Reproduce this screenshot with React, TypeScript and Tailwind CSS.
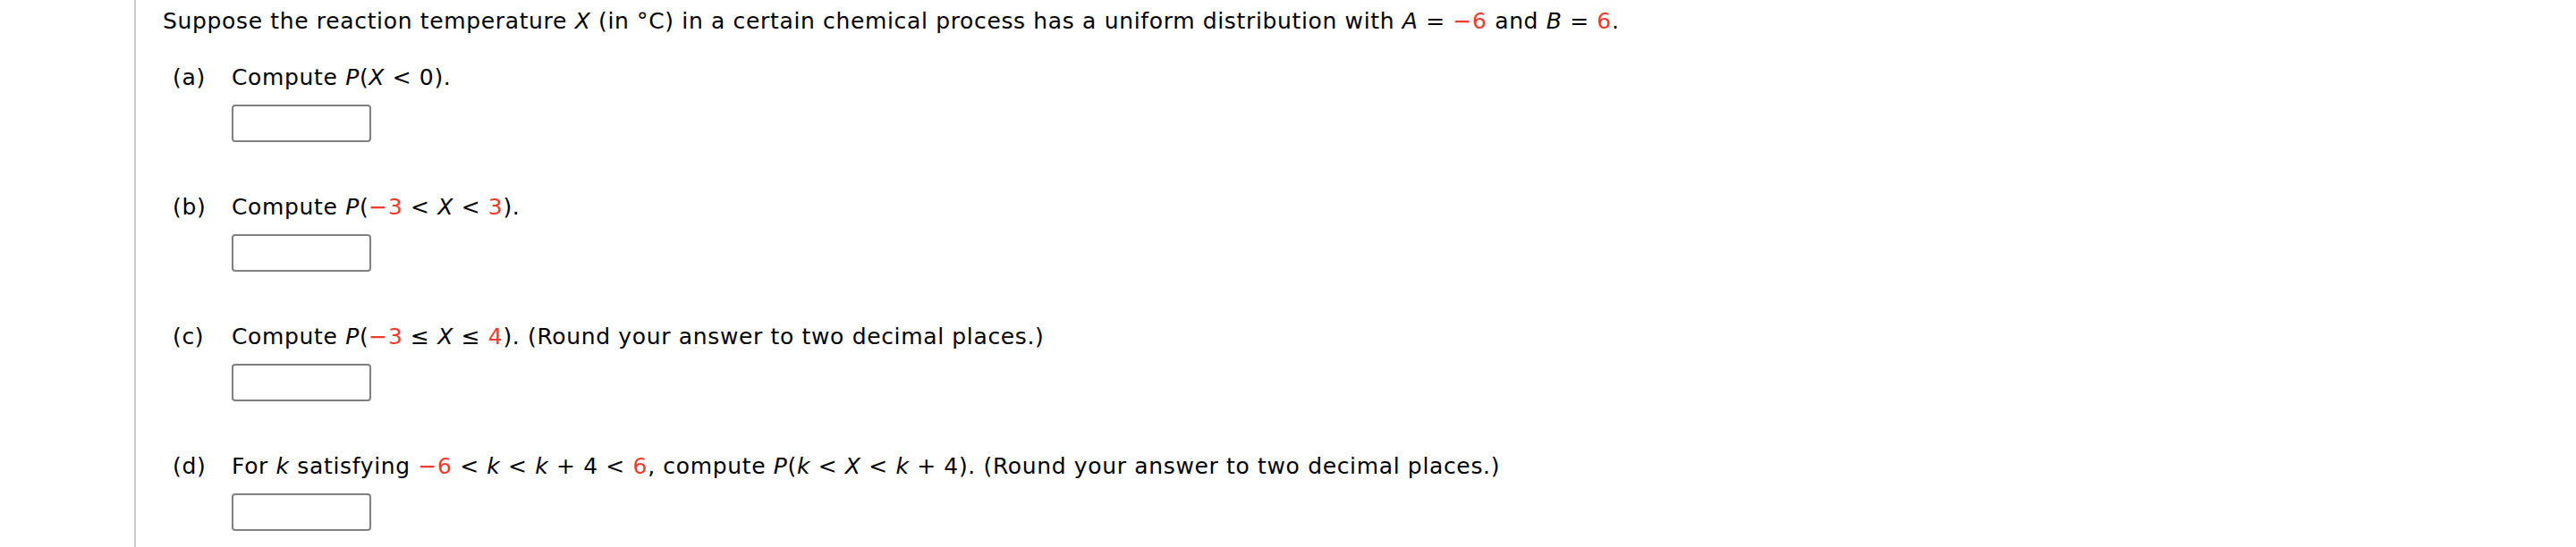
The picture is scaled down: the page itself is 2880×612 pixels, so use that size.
import { Fragment } from "react";

const Red = ({ children }: { children: React.ReactNode }) => (
  <span className="text-[#ee3b2b]">{children}</span>
);

const V = ({ children }: { children: React.ReactNode }) => <i>{children}</i>;

const AnswerBox = () => (
  <div className="mt-[12px] w-[156px] h-[42px] border-2 border-[#808080] rounded-[4px] bg-white" />
);

const Part = ({
  label,
  first,
  children,
}: {
  label: string;
  first?: boolean;
  children: React.ReactNode;
}) => (
  <div className={first ? "flex ml-[11px] mt-[27px]" : "flex ml-[11px] mt-[55px]"}>
    <div className="w-[66px] shrink-0">({label})</div>
    <div>
      <div>{children}</div>
      <AnswerBox />
    </div>
  </div>
);

const App = () => {
  return (
    <div className="w-full h-[612px] bg-white text-black">
      <div
        className="ml-[150px] h-full border-l-2 border-[#cccccc] pl-[30px] pt-[6px] text-[25px] leading-[36px] tracking-[0.65px]"
        style={{ fontFamily: '"DejaVu Sans", Verdana, sans-serif' }}
      >
        <p>
          Suppose the reaction temperature <V>X</V> (in °C) in a certain chemical process has a uniform
          distribution with <V>A</V> = <Red>−6</Red> and <V>B</V> = <Red>6</Red>.
        </p>
        <Part label="a" first>
          Compute <V>P</V>(<V>X</V> &lt; 0).
        </Part>
        <Part label="b">
          Compute <V>P</V>(<Red>−3</Red> &lt; <V>X</V> &lt; <Red>3</Red>).
        </Part>
        <Part label="c">
          Compute <V>P</V>(<Red>−3</Red> ≤ <V>X</V> ≤ <Red>4</Red>). (Round your answer to two decimal places.)
        </Part>
        <Part label="d">
          <Fragment>
            For <V>k</V> satisfying <Red>−6</Red> &lt; <V>k</V> &lt; <V>k</V> + 4 &lt; <Red>6</Red>, compute{" "}
            <V>P</V>(<V>k</V> &lt; <V>X</V> &lt; <V>k</V> + 4). (Round your answer to two decimal places.)
          </Fragment>
        </Part>
      </div>
    </div>
  );
};

export default App;
